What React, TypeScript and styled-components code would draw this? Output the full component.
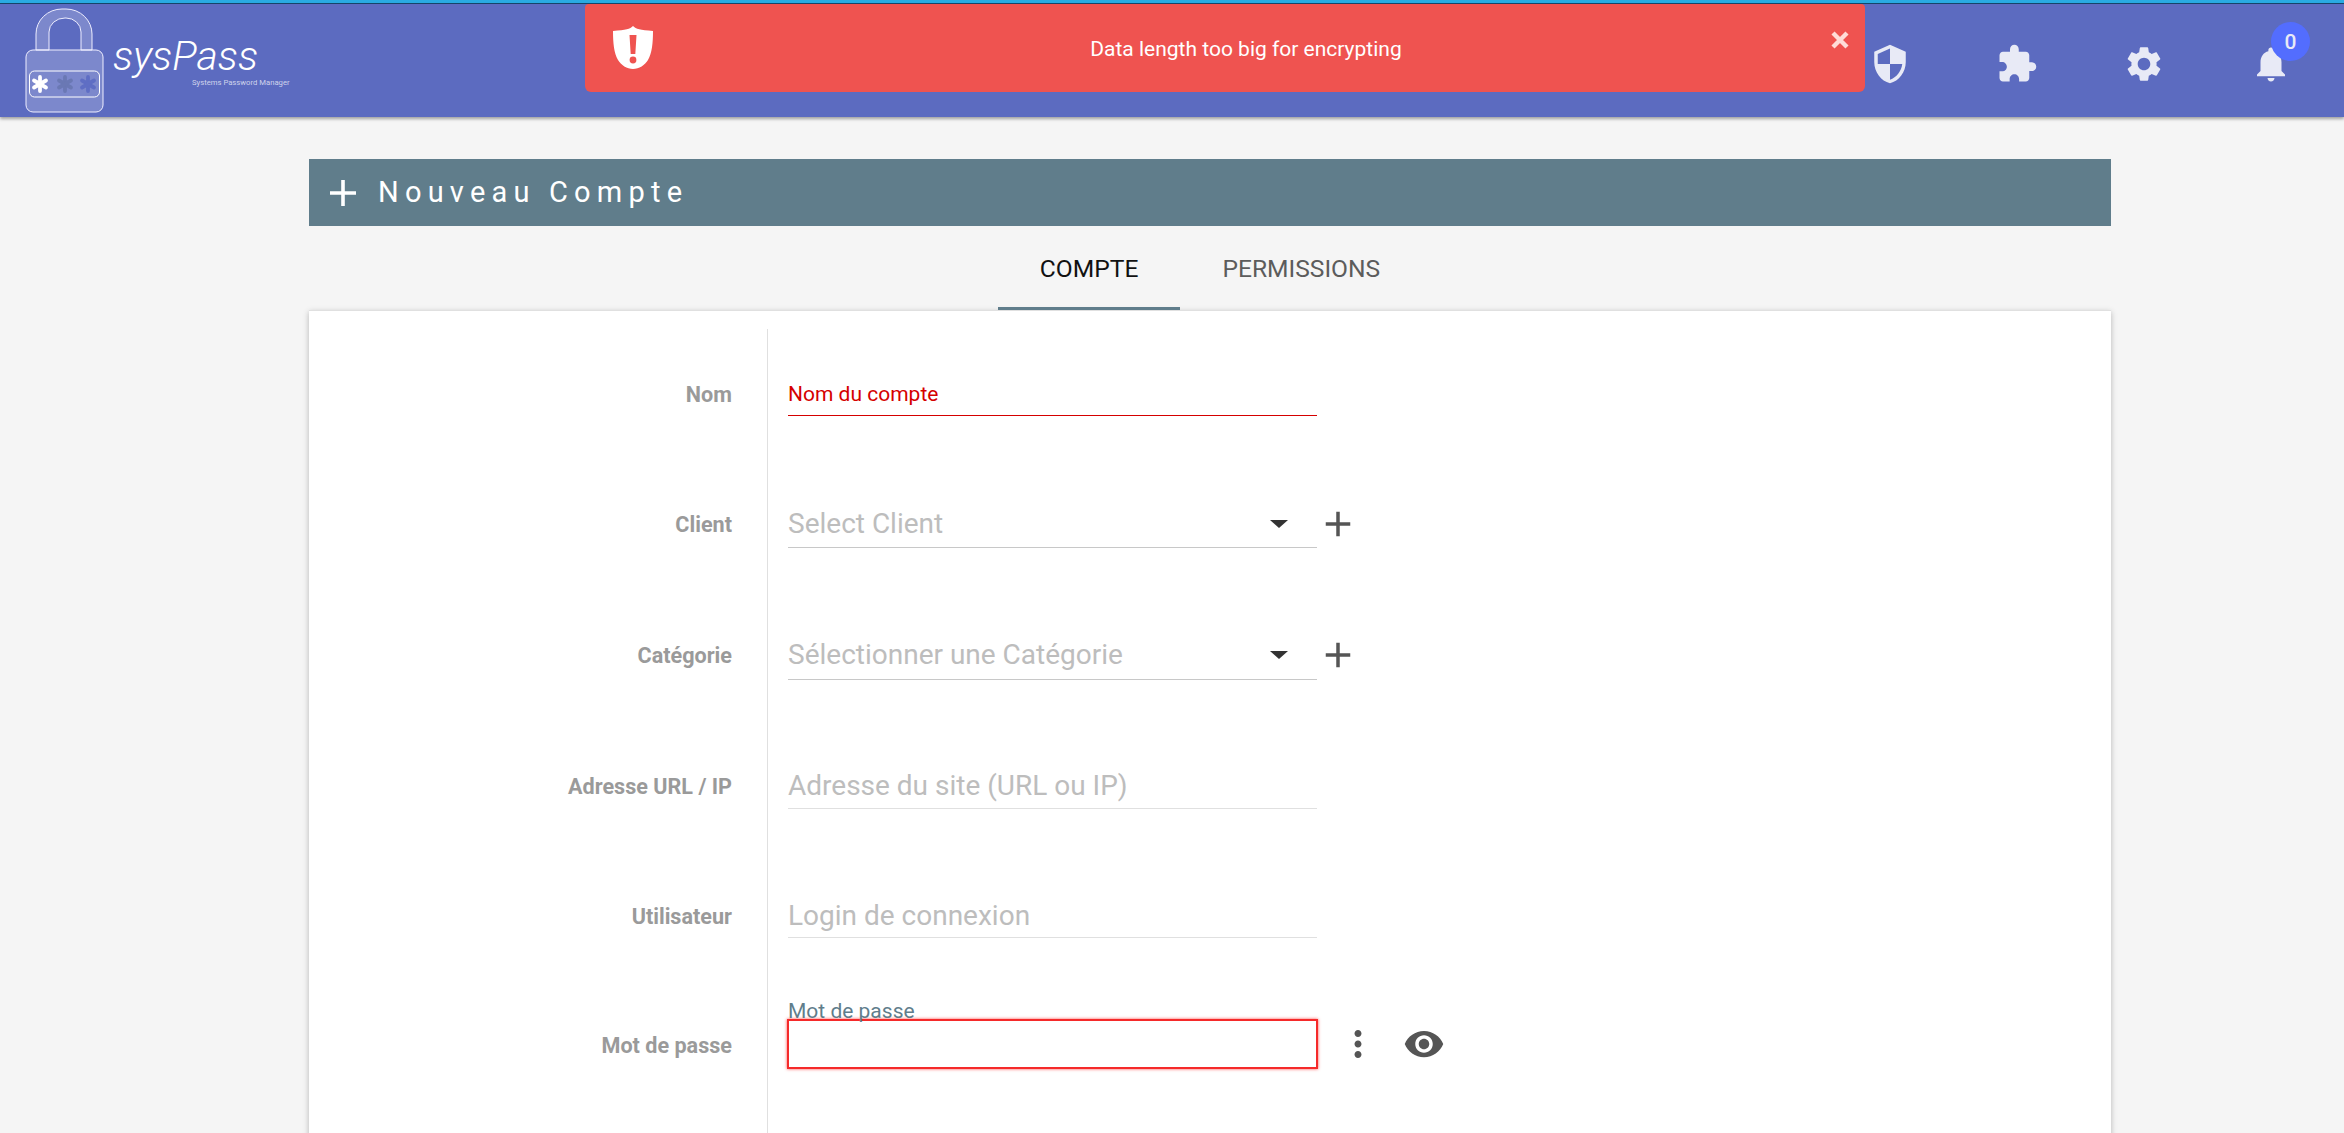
import React from "react";
import styled, { createGlobalStyle } from "styled-components";

const Global = createGlobalStyle`
  html, body { margin: 0; padding: 0; height: 100%; overflow: hidden; background: #f5f5f5; }
  body { font-family: Roboto, "Liberation Sans", sans-serif; }
  #root { height: 100%; }
  * { box-sizing: border-box; }
`;

const Strip = styled.div`
  height: 4px;
  background: #29abe2;
  border-bottom: 1px solid #17476b;
`;

const Header = styled.header`
  position: relative;
  height: 113px;
  background: #5c6bc0;
  box-shadow: 0 2px 3px rgba(0, 0, 0, 0.35);
  display: flex;
  align-items: stretch;
  justify-content: space-between;
`;

const Logo = styled.svg`
  width: 300px;
  height: 113px;
  display: block;
`;

const LogoName = styled.text`
  font-family: Roboto, sans-serif;
  font-style: italic;
  font-weight: 300;
  font-size: 41px;
  fill: #fff;
`;

const LogoTag = styled.text`
  font-family: Roboto, sans-serif;
  font-size: 7.7px;
  fill: #cfd3ec;
`;

const HeaderIcons = styled.nav`
  display: flex;
  align-items: flex-start;
  gap: 85px;
  padding: 39px 52px 0 0;
`;

const IconSlot = styled.div`
  position: relative;
  width: 42px;
  height: 42px;
  color: #e8eaf6;
`;

const Glyph = styled.svg<{ $size?: number }>`
  width: ${(p) => p.$size ?? 42}px;
  height: ${(p) => p.$size ?? 42}px;
  display: block;
  fill: currentColor;
`;

const Badge = styled.span`
  position: absolute;
  top: -21px;
  left: 21px;
  width: 39px;
  height: 39px;
  border-radius: 50%;
  background: #536dfe;
  color: #e8eaf6;
  font-size: 21px;
  font-weight: 500;
  display: flex;
  align-items: center;
  justify-content: center;
`;

const Toast = styled.div`
  position: absolute;
  top: 0;
  left: 585px;
  width: 1280px;
  height: 88px;
  background: #ef5350;
  border-radius: 4px 4px 6px 6px;
  color: #fff;
  display: flex;
  align-items: center;
  padding: 0 16px 0 28px;
`;

const ToastIcon = styled.svg`
  width: 40px;
  height: 43px;
  flex: none;
  margin-bottom: 2px;
`;

const ToastText = styled.div`
  flex: 1;
  text-align: center;
  font-size: 21px;
  line-height: 24px;
  padding: 2px 0 0 8px;
`;

const ToastClose = styled.svg`
  width: 18px;
  height: 18px;
  flex: none;
  align-self: flex-start;
  margin-top: 27px;
  stroke: #ffdcd8;
  stroke-width: 4.4;
  fill: none;
`;

const Main = styled.main`
  width: 1802px;
  margin: 42px 0 0 309px;
`;

const TitleBar = styled.div`
  height: 67px;
  background: #607d8b;
  color: #fff;
  display: flex;
  align-items: center;
  padding-left: 21px;
  gap: 22px;
`;

const Title = styled.h1`
  margin: 0;
  font-size: 29px;
  font-weight: 400;
  letter-spacing: 6.2px;
  line-height: 1;
`;

const TitlePlus = styled.svg`
  width: 26px;
  height: 26px;
  stroke: #fff;
  stroke-width: 3.6;
  flex: none;
`;

const Tabs = styled.div`
  height: 84px;
  display: flex;
  justify-content: center;
`;

const Tab = styled.div<{ $active?: boolean }>`
  height: 84px;
  padding: 4px 42px 0;
  display: flex;
  align-items: center;
  font-size: 24.6px;
  text-transform: uppercase;
  color: ${(p) => (p.$active ? "#111" : "#5c5c5c")};
  border-bottom: 3px solid ${(p) => (p.$active ? "#607d8b" : "transparent")};
`;

const Card = styled.section`
  background: #fff;
  border-top: 1px solid #e0e0e0;
  box-shadow: 0 2px 6px rgba(0, 0, 0, 0.26);
  padding-top: 18px;
  height: 900px;
`;

const Row = styled.div<{ $h?: number }>`
  display: grid;
  grid-template-columns: 459px 1fr;
  height: ${(p) => p.$h ?? 130}px;
`;

const Label = styled.div`
  border-right: 1px solid #e0e0e0;
  display: flex;
  align-items: center;
  justify-content: flex-end;
  padding-right: 35px;
  font-size: 21.6px;
  font-weight: 700;
  color: #9a9a9a;
`;

const Cell = styled.div`
  display: flex;
  align-items: center;
  padding-left: 20px;
`;

const Field = styled.div<{ $h: number; $line: string; $color: string; $size: number }>`
  width: 529px;
  height: ${(p) => p.$h}px;
  border-bottom: 1px solid ${(p) => p.$line};
  color: ${(p) => p.$color};
  font-size: ${(p) => p.$size}px;
  display: flex;
  align-items: center;
  justify-content: space-between;
`;

const Caret = styled.span`
  width: 0;
  height: 0;
  margin-right: 29px;
  border-left: 9px solid transparent;
  border-right: 9px solid transparent;
  border-top: 8px solid #333;
`;

const ActionIcon = styled.span`
  color: #555;
  display: block;
  width: 42px;
  height: 42px;
`;

const PasswordField = styled.div`
  position: relative;
  width: 531px;
  height: 50px;
  margin: -2px 19px 0 -1px;
  background: #fff;
  border: 2px solid #f52a2a;
  box-shadow: 0 0 3px rgba(255, 0, 0, 0.7);
`;

const FloatingLabel = styled.span`
  position: absolute;
  left: -1px;
  top: -22px;
  font-size: 21px;
  line-height: 24px;
  color: #607d8b;
`;

const PasswordActions = styled.div`
  display: flex;
  gap: 24px;
  margin-top: -2px;
`;

const add = "M19 13h-6v6h-2v-6H5v-2h6V5h2v6h6v2z";

const Asterisk = ({ x, color, w }: { x: number; color: string; w: number }) => (
  <g stroke={color} strokeWidth={w} strokeLinecap="round">
    <line x1={x} y1={77} x2={x} y2={91} />
    <line x1={x - 6} y1={80.5} x2={x + 6} y2={87.5} />
    <line x1={x - 6} y1={87.5} x2={x + 6} y2={80.5} />
  </g>
);

export default function App() {
  return (
    <>
      <Global />
      <Strip />
      <Header>
        <Logo viewBox="0 4 300 113">
          <path
            d="M36 50V34a26 25 0 0 1 26-25h4a26 25 0 0 1 26 25v16h-11V32a15 14 0 0 0-15-14h-1a16 14 0 0 0-16 14v18z"
            fill="rgba(255,255,255,.2)"
            stroke="#eef"
            strokeWidth="1"
          />
          <rect x="26" y="50" width="77" height="62" rx="7" fill="rgba(255,255,255,.2)" stroke="#eef" strokeWidth="1" />
          <rect x="29.5" y="71" width="70" height="26" rx="5" fill="none" stroke="#fff" strokeWidth="1" />
          <Asterisk x={40} color="#fff" w={3.8} />
          <Asterisk x={65} color="#6a78b4" w={3.8} />
          <Asterisk x={88} color="#5f6ec4" w={3.8} />
          <LogoName x="113" y="70">sysPass</LogoName>
          <LogoTag x="192" y="85">Systems Password Manager</LogoTag>
        </Logo>
        <HeaderIcons>
          <IconSlot>
            <Glyph viewBox="0 0 24 24">
              <path d="M12 1L3 5v6c0 5.55 3.84 10.74 9 12 5.16-1.26 9-6.45 9-12V5l-9-4zm0 10.99h7c-.53 4.12-3.28 7.79-7 8.94V12H5V6.3l7-3.11v8.8z" />
            </Glyph>
          </IconSlot>
          <IconSlot>
            <Glyph viewBox="0 0 24 24">
              <path d="M20.5 11H19V7c0-1.1-.9-2-2-2h-4V3.5C13 2.12 11.88 1 10.5 1S8 2.12 8 3.5V5H4c-1.1 0-1.99.9-1.99 2v3.8H3.5c1.49 0 2.7 1.21 2.7 2.7s-1.21 2.7-2.7 2.7H2V20c0 1.1.9 2 2 2h3.8v-1.5c0-1.49 1.21-2.7 2.7-2.7 1.49 0 2.7 1.21 2.7 2.7V22H17c1.1 0 2-.9 2-2v-4h1.5c1.38 0 2.5-1.12 2.5-2.5S21.88 11 20.5 11z" />
            </Glyph>
          </IconSlot>
          <IconSlot>
            <Glyph viewBox="0 0 24 24">
              <path d="M19.14 12.94c.04-.3.06-.61.06-.94 0-.32-.02-.64-.07-.94l2.03-1.58c.18-.14.23-.41.12-.61l-1.92-3.32c-.12-.22-.37-.29-.59-.22l-2.39.96c-.5-.38-1.03-.7-1.62-.94l-.36-2.54c-.04-.24-.24-.41-.48-.41h-3.84c-.24 0-.43.17-.47.41l-.36 2.54c-.59.24-1.13.57-1.62.94l-2.39-.96c-.22-.08-.47 0-.59.22L2.74 8.87c-.12.21-.08.47.12.61l2.03 1.58c-.05.3-.09.63-.09.94s.02.64.07.94l-2.03 1.58c-.18.14-.23.41-.12.61l1.92 3.32c.12.22.37.29.59.22l2.39-.96c.5.38 1.03.7 1.62.94l.36 2.54c.05.24.24.41.48.41h3.84c.24 0 .44-.17.47-.41l.36-2.54c.59-.24 1.13-.56 1.62-.94l2.39.96c.22.08.47 0 .59-.22l1.92-3.32c.12-.22.07-.47-.12-.61l-2.01-1.58zM12 15.6c-1.98 0-3.6-1.62-3.6-3.6s1.62-3.6 3.6-3.6 3.6 1.62 3.6 3.6-1.62 3.6-3.6 3.6z" />
            </Glyph>
          </IconSlot>
          <IconSlot>
            <Glyph viewBox="0 0 24 24">
              <path d="M12 22c1.1 0 2-.9 2-2h-4c0 1.1.89 2 2 2zm6-6v-5c0-3.07-1.64-5.64-4.5-6.32V4c0-.83-.67-1.5-1.5-1.5s-1.5.67-1.5 1.5v.68C7.63 5.36 6 7.92 6 11v5l-2 2v1h16v-1l-2-2z" />
            </Glyph>
            <Badge>0</Badge>
          </IconSlot>
        </HeaderIcons>
        <Toast>
          <ToastIcon viewBox="0 0 40 43">
            <path d="M20 0c3 3 7 4 20 5 0 12-1 22-5 29-3 5-9 9-15 9S8 39 5 34C1 27 0 17 0 5c13-1 17-2 20-5z" fill="#fff" />
            <path d="M16.5 9h7l-1.2 19h-4.6z" fill="#ef5350" />
            <circle cx="20" cy="34" r="3.4" fill="#ef5350" />
          </ToastIcon>
          <ToastText>Data length too big for encrypting</ToastText>
          <ToastClose viewBox="0 0 18 18">
            <path d="M2 2l14 14M16 2L2 16" />
          </ToastClose>
        </Toast>
      </Header>
      <Main>
        <TitleBar>
          <TitlePlus viewBox="0 0 26 26">
            <path d="M13 0v26M0 13h26" />
          </TitlePlus>
          <Title>Nouveau Compte</Title>
        </TitleBar>
        <Tabs>
          <Tab $active>Compte</Tab>
          <Tab>Permissions</Tab>
        </Tabs>
        <Card>
          <Row>
            <Label>Nom</Label>
            <Cell>
              <Field $h={44} $line="#d50000" $color="#d50000" $size={21}>Nom du compte</Field>
            </Cell>
          </Row>
          <Row>
            <Label>Client</Label>
            <Cell>
              <Field $h={48} $line="#c8c8c8" $color="#bdbdbd" $size={28}>
                Select Client
                <Caret />
              </Field>
              <ActionIcon>
                <Glyph viewBox="0 0 24 24"><path d={add} /></Glyph>
              </ActionIcon>
            </Cell>
          </Row>
          <Row $h={132}>
            <Label>Catégorie</Label>
            <Cell>
              <Field $h={50} $line="#c8c8c8" $color="#bdbdbd" $size={28}>
                Sélectionner une Catégorie
                <Caret />
              </Field>
              <ActionIcon>
                <Glyph viewBox="0 0 24 24"><path d={add} /></Glyph>
              </ActionIcon>
            </Cell>
          </Row>
          <Row>
            <Label>Adresse URL / IP</Label>
            <Cell>
              <Field $h={46} $line="#e0e0e0" $color="#bdbdbd" $size={28}>Adresse du site (URL ou IP)</Field>
            </Cell>
          </Row>
          <Row>
            <Label>Utilisateur</Label>
            <Cell>
              <Field $h={44} $line="#e0e0e0" $color="#bdbdbd" $size={28}>Login de connexion</Field>
            </Cell>
          </Row>
          <Row $h={128}>
            <Label>Mot de passe</Label>
            <Cell>
              <PasswordField>
                <FloatingLabel>Mot de passe</FloatingLabel>
              </PasswordField>
              <PasswordActions>
                <ActionIcon>
                  <Glyph viewBox="0 0 24 24">
                    <path d="M12 8c1.1 0 2-.9 2-2s-.9-2-2-2-2 .9-2 2 .9 2 2 2zm0 2c-1.1 0-2 .9-2 2s.9 2 2 2 2-.9 2-2-.9-2-2-2zm0 6c-1.1 0-2 .9-2 2s.9 2 2 2 2-.9 2-2-.9-2-2-2z" />
                  </Glyph>
                </ActionIcon>
                <ActionIcon>
                  <Glyph viewBox="0 0 24 24">
                    <path d="M12 4.5C7 4.5 2.73 7.61 1 12c1.73 4.39 6 7.5 11 7.5s9.27-3.11 11-7.5c-1.73-4.39-6-7.5-11-7.5zM12 17c-2.76 0-5-2.24-5-5s2.24-5 5-5 5 2.24 5 5-2.24 5-5 5zm0-8c-1.66 0-3 1.34-3 3s1.34 3 3 3 3-1.34 3-3-1.34-3-3-3z" />
                  </Glyph>
                </ActionIcon>
              </PasswordActions>
            </Cell>
          </Row>
          <Row>
            <Label />
            <Cell />
          </Row>
        </Card>
      </Main>
    </>
  );
}
